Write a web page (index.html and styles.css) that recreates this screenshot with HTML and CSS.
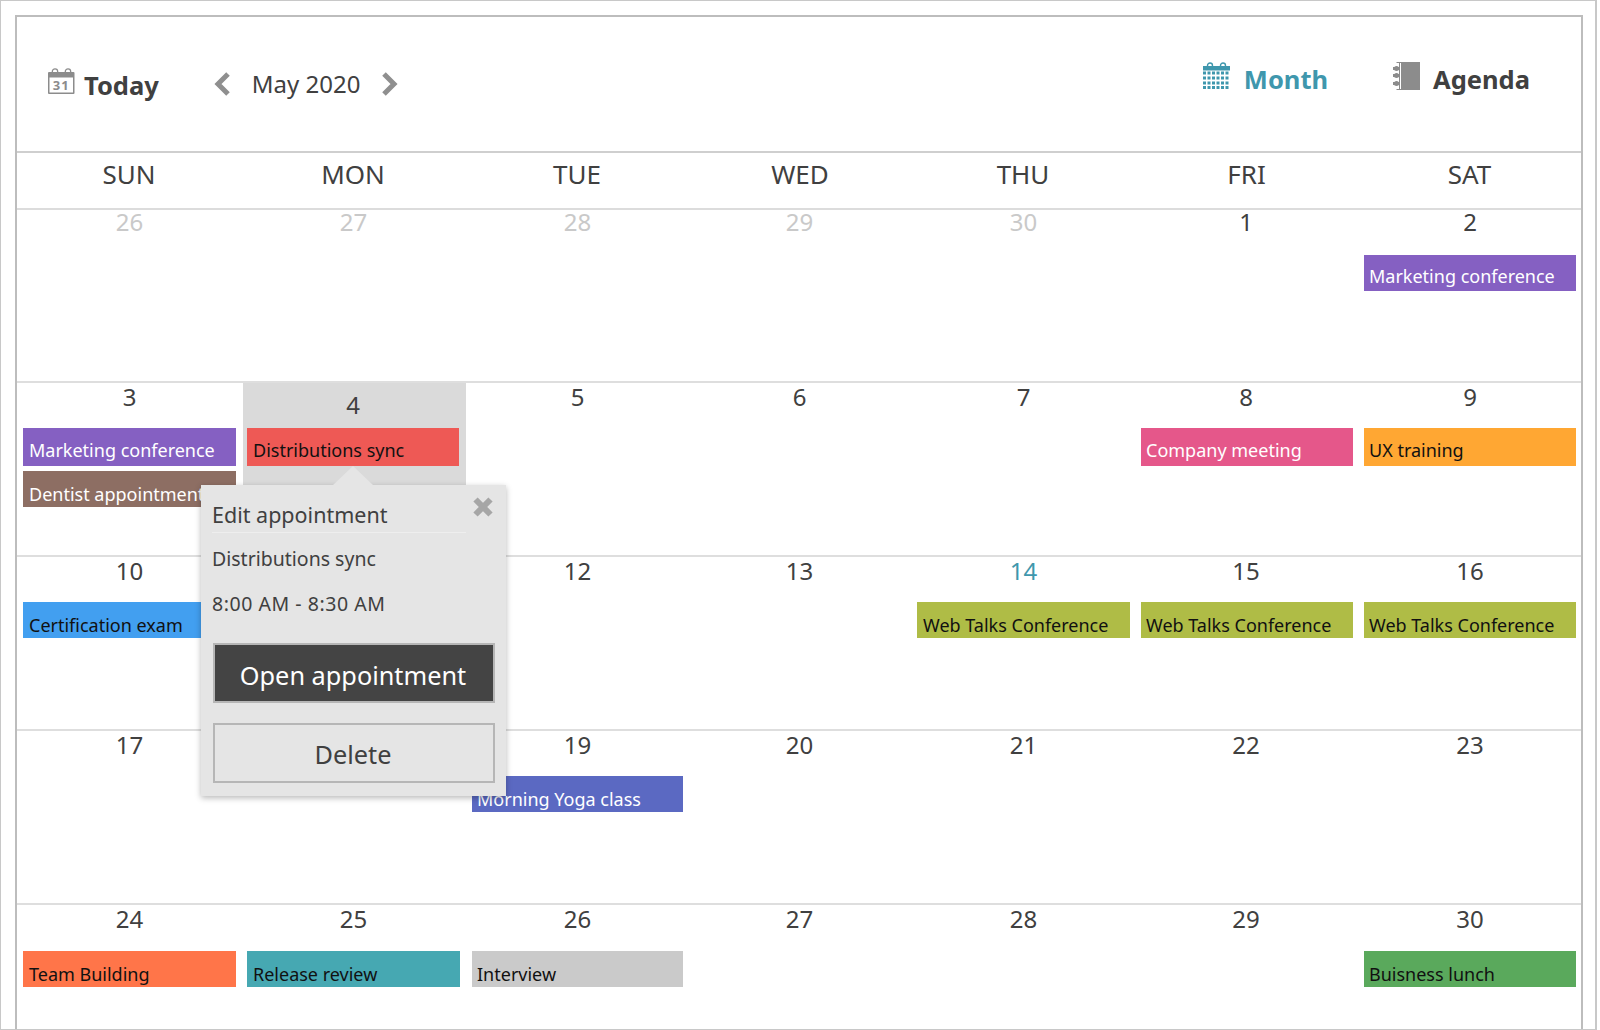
FILE: index.html
```html
<!DOCTYPE html>
<html lang="en">
<head>
<meta charset="utf-8">
<title>Calendar</title>
<link rel="stylesheet" href="styles.css">
</head>
<body>
<div class="frame">
  <main class="scheduler">
    <header class="toolbar">
      <div class="tool-left">
        <button class="today">
          <svg class="icon-today" viewBox="0 0 27 27" width="27" height="27"><path fill="#8c8c8c" d="M1 4h24.500a1 1 0 0 1 1 1v20a1 1 0 0 1-1 1H1a1 1 0 0 1-1-1V5a1 1 0 0 1 1-1z"/><rect x="1.500" y="9.500" width="23.500" height="15" fill="#fff"/><circle cx="7" cy="3.500" r="2.700" fill="none" stroke="#8c8c8c" stroke-width="1.300"/><circle cx="20" cy="3.500" r="2.700" fill="none" stroke="#8c8c8c" stroke-width="1.300"/><text x="13.200" y="21.500" text-anchor="middle" class="cal-num">31</text></svg>
          <span>Today</span>
        </button>
        <nav class="pager">
          <svg viewBox="0 0 18 26" width="18" height="26"><path d="M15 3 5 13l10 10" fill="none" stroke="#8f8f8f" stroke-width="5"/></svg>
          <span class="month-label">May 2020</span>
          <svg viewBox="0 0 18 26" width="18" height="26"><path d="m3 3 10 10L3 23" fill="none" stroke="#8f8f8f" stroke-width="5"/></svg>
        </nav>
      </div>
      <div class="tool-right">
        <button class="view active">
          <svg viewBox="0 0 27 27" width="27" height="27"><path fill="#3f97ad" d="M0 4h27v4.500H0z"/><circle cx="7" cy="3.500" r="2.500" fill="none" stroke="#3f97ad" stroke-width="1.400"/><circle cx="20" cy="3.500" r="2.500" fill="none" stroke="#3f97ad" stroke-width="1.400"/><path fill="none" stroke="#3f97ad" stroke-width="3" stroke-dasharray="3 1.500" d="M0 11h27M0 16h27M0 21h27M0 25.500h27" /></svg>
          <span>Month</span>
        </button>
        <button class="view agenda">
          <svg viewBox="0 0 27 28" width="27" height="28"><path fill="#8c8c8c" d="M8 0h19v28H8z"/><path fill="none" stroke="#8c8c8c" stroke-width="1" d="M3.500 0.500H8M3.500 27.500H8M6.500 0v28"/><path fill="#8c8c8c" d="M0 5h6.500v3H0zM0 12h6.500v3H0zM0 20h6.500v3H0z"/><circle cx="3.500" cy="6.500" r="2.500" fill="#8c8c8c"/><circle cx="3.500" cy="13.500" r="2.500" fill="#8c8c8c"/><circle cx="3.500" cy="21.500" r="2.500" fill="#8c8c8c"/></svg>
          <span>Agenda</span>
        </button>
      </div>
    </header>

    <div class="weekdays">
      <div>SUN</div><div>MON</div><div>TUE</div><div>WED</div><div>THU</div><div>FRI</div><div>SAT</div>
    </div>

    <section class="month">
      <div class="week first">
        <div class="day other"><div class="num">26</div></div>
        <div class="day other"><div class="num">27</div></div>
        <div class="day other"><div class="num">28</div></div>
        <div class="day other"><div class="num">29</div></div>
        <div class="day other"><div class="num">30</div></div>
        <div class="day"><div class="num">1</div></div>
        <div class="day"><div class="num">2</div><div class="event purple">Marketing conference</div></div>
      </div>
      <div class="week tall">
        <div class="day"><div class="num">3</div><div class="event purple">Marketing conference</div><div class="event brown short">Dentist appointment</div></div>
        <div class="day selected"><div class="num">4</div><div class="event red">Distributions sync</div></div>
        <div class="day"><div class="num">5</div></div>
        <div class="day"><div class="num">6</div></div>
        <div class="day"><div class="num">7</div></div>
        <div class="day"><div class="num">8</div><div class="event pink">Company meeting</div></div>
        <div class="day"><div class="num">9</div><div class="event orange">UX training</div></div>
      </div>
      <div class="week">
        <div class="day"><div class="num">10</div><div class="event blue">Certification exam</div></div>
        <div class="day"><div class="num">11</div></div>
        <div class="day"><div class="num">12</div></div>
        <div class="day"><div class="num">13</div></div>
        <div class="day today-cell"><div class="num">14</div><div class="event lime">Web Talks Conference</div></div>
        <div class="day"><div class="num">15</div><div class="event lime">Web Talks Conference</div></div>
        <div class="day"><div class="num">16</div><div class="event lime">Web Talks Conference</div></div>
      </div>
      <div class="week">
        <div class="day"><div class="num">17</div></div>
        <div class="day"><div class="num">18</div></div>
        <div class="day narrow"><div class="num">19</div><div class="event indigo">Morning Yoga class</div></div>
        <div class="day"><div class="num">20</div></div>
        <div class="day"><div class="num">21</div></div>
        <div class="day"><div class="num">22</div></div>
        <div class="day"><div class="num">23</div></div>
      </div>
      <div class="week last">
        <div class="day"><div class="num">24</div><div class="event coral">Team Building</div></div>
        <div class="day"><div class="num">25</div><div class="event teal">Release review</div></div>
        <div class="day narrow"><div class="num">26</div><div class="event grey">Interview</div></div>
        <div class="day"><div class="num">27</div></div>
        <div class="day"><div class="num">28</div></div>
        <div class="day"><div class="num">29</div></div>
        <div class="day"><div class="num">30</div><div class="event green">Buisness lunch</div></div>
      </div>
    </section>

    <aside class="popover">
      <div class="popover-title">Edit appointment</div>
      <svg class="popover-close" viewBox="0 0 22 22" width="22" height="22"><path d="M3.500 3.500l15 15M18.500 3.500l-15 15" stroke="#a6a6a6" stroke-width="6" fill="none"/></svg>
      <p class="popover-line first">Distributions sync</p>
      <p class="popover-line time">8:00 AM - 8:30 AM</p>
      <button class="btn primary">Open appointment</button>
      <button class="btn secondary">Delete</button>
    </aside>
  </main>
</div>
</body>
</html>
```

FILE: styles.css
```css
* { box-sizing: border-box; }
html, body { margin: 0; padding: 0; background: #fff; }
body { width: 1600px; height: 1030px; overflow: hidden; font-family: "Noto Sans", "Open Sans", sans-serif; color: #404040; }
button { font-family: inherit; background: none; border: 0; padding: 0; color: inherit; }

.frame { width: 1597px; height: 1030px; border: 1px solid #c8c8c8; border-width: 1px 2px 1px 1px; padding: 14px 13px 0 14px; overflow: hidden; }
.scheduler { position: relative; width: 1568px; height: 1014px; border: 2px solid #bdbdbd; border-bottom: 0; }

.toolbar { height: 136px; display: flex; justify-content: space-between; border-bottom: 2px solid #cfcfcf; }
.tool-left { display: flex; align-items: flex-start; padding: 50px 0 0 31px; }
.today { display: flex; align-items: flex-start; gap: 9px; font-size: 25.500px; font-weight: 700; line-height: 34px; color: #404040; }
.today span { margin-top: 1px; }
.icon-today { display: block; margin-top: 1px; }
.cal-num { font-size: 13px; fill: #8c8c8c; font-family: "Noto Sans", sans-serif; letter-spacing: 1px; }
.pager { display: flex; align-items: center; margin-left: 54px; height: 34px; }
.month-label { font-size: 24px; margin: 0 21px 0 21px; line-height: 34px; }
.tool-right { display: flex; align-items: flex-start; gap: 65px; padding: 45px 51px 0 0; }
.view { display: flex; align-items: flex-start; gap: 14px; font-size: 25.500px; font-weight: 700; line-height: 34px; color: #404040; }
.view span { margin-top: 0; }
.view svg { display: block; }
.view.agenda { gap: 13px; }
.view.active { color: #3f97ad; }

.weekdays, .week { display: grid; grid-template-columns: 224px 224px 224px 222px 224px 223px 1fr; }
.weekdays { height: 57px; border-bottom: 2px solid #dcdcdc; font-size: 26px; line-height: 42px; text-align: center; }

.week { height: 174px; border-bottom: 2px solid #dedede; }
.week.first { height: 173px; }
.week.last { border-bottom: 0; }
.day { display: flex; flex-direction: column; align-items: stretch; padding: 0 5px 0 6px; }
.num { font-size: 24px; line-height: 28px; text-align: center; margin-bottom: 17px; }
.week.first .num { margin-top: -2px; margin-bottom: 19px; }
.week.last .num { margin-bottom: 18px; }
.other .num { color: #c9c9c9; }
.today-cell .num { color: #3f97ad; }
.day:nth-child(4) .num { padding-right: 2px; }
.day:nth-child(6) .num { padding-right: 2px; }

.event { height: 36px; padding: 9px 6px 0; font-size: 18px; line-height: 28px; white-space: nowrap; overflow: hidden; color: #111; margin-bottom: 6px; }
.week.first .event { padding-top: 7px; }
.week.tall .event { height: 38px; padding-top: 8px; margin-bottom: 5px; }
.week.tall .event.short { height: 36px; padding-top: 9px; }
.day:nth-child(6) .event { padding-left: 5px; }
.day:nth-child(7) .event { padding-left: 5px; }
.selected { background: #dadada; margin: 0 -1px 0 2px; padding: 0 7px 0 4px; }
.selected .num { margin-top: 8px; }
.week.tall .selected .num { margin-bottom: 9px; }
.narrow { padding: 0 6px 0 7px; }
.narrow .event { padding-left: 5px; }

.purple { background: #8560c2; color: #fff; }
.brown { background: #8d6e63; color: #fff; }
.red { background: #ee5955; }
.pink { background: #e5578a; color: #fff; }
.orange { background: #ffa733; }
.blue { background: #429ff0; }
.lime { background: #afbc46; }
.indigo { background: #5b69c2; color: #fff; }
.coral { background: #ff7549; }
.teal { background: #46a8b2; }
.grey { background: #cacaca; }
.green { background: #5aa95c; }

.popover { position: absolute; left: 184px; top: 468px; width: 305px; height: 311px; background: #e5e5e5; box-shadow: 0 2px 6px rgba(0,0,0,.28); padding: 12px 12px 0 11px; }
.popover::before { content: ""; position: absolute; left: 132px; top: -19px; width: 0; height: 0; border: 20px solid transparent; border-top: 0; border-bottom: 19px solid #e5e5e5; }
.popover-title { font-size: 21.500px; line-height: 36px; height: 36px; margin-right: 28px; border-bottom: 1px solid #eeeeee; }
.popover-close { position: absolute; right: 12px; top: 11px; display: block; }
.popover-line { margin: 8px 0 0; font-size: 19.500px; line-height: 28px; }
.popover-line.first { margin-top: 12px; }
.popover-line.time { margin-top: 17px; letter-spacing: .55px; }
.btn { display: block; width: 282px; margin-left: 1px; height: 60px; font-size: 25.300px; text-align: center; border: 2px solid #b6b6b6; padding-right: 2px; }
.btn.primary { background: #444; color: #fff; margin-top: 25px; padding-top: 3px; }
.btn.secondary { background: transparent; color: #404040; margin-top: 20px; padding-top: 1px; }
```
